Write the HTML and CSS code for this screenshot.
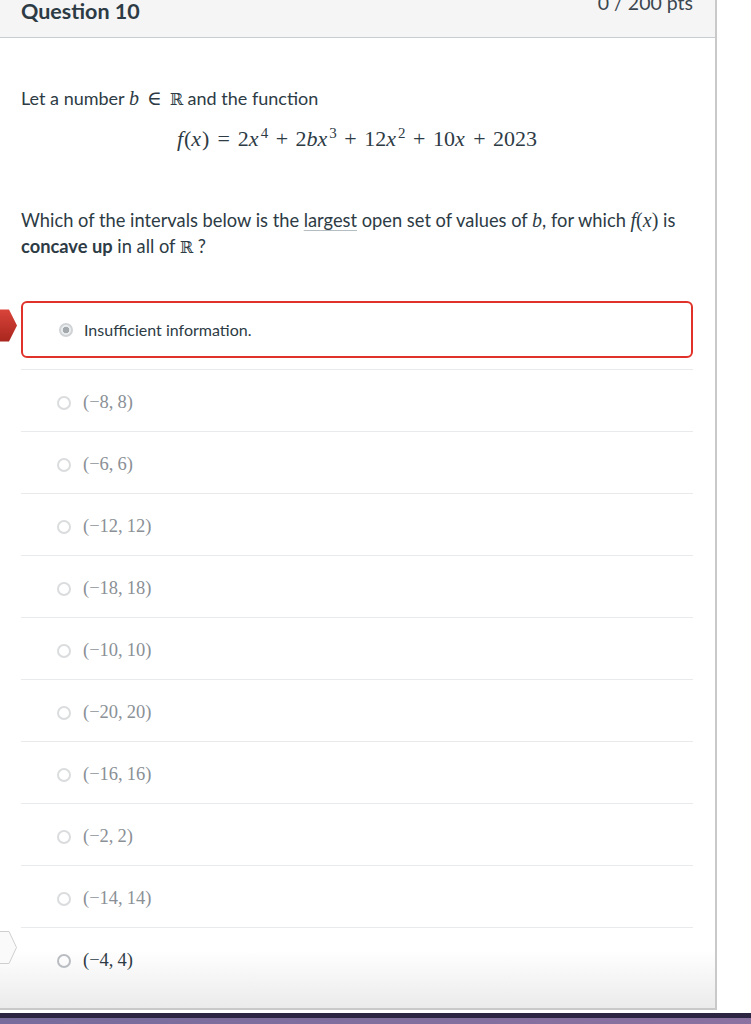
FILE: index.html
```html
<!DOCTYPE html>
<html lang="en">
<head>
<meta charset="utf-8">
<title>Question 10</title>
<link rel="stylesheet" href="styles.css">
</head>
<body>
<div class="page">
  <div class="card">
    <div class="header">
      <span class="title">Question 10</span>
      <span class="pts">0 / 200 pts</span>
    </div>
    <div class="content">
      <p class="intro">Let a number <span class="m"><i>b</i> <span class="rel">∈</span> <span class="bb">ℝ</span></span> and the function</p>
      <div class="formula"><span class="m big"><i>f</i>(<i>x</i>)<span class="eq">=</span>2<i>x</i><sup>4</sup><span class="op">+</span>2<i>bx</i><sup>3</sup><span class="op">+</span>12<i>x</i><sup>2</sup><span class="op">+</span>10<i>x</i><span class="op">+</span>2023</span></div>
      <p class="question">Which of the intervals below is the <span class="u">largest</span> open set of values of <span class="m"><i>b</i></span>, for which <span class="m"><i>f</i>(<i>x</i>)</span> is <strong>concave up</strong> in all of <span class="m"><span class="bb">ℝ</span></span> ?</p>
      <div class="answers">
        <div class="answer selected">
          <div class="choice">
            <span class="radio checked"></span>
            <span class="label">Insufficient information.</span>
          </div>
        </div>
        <div class="answer"><div class="choice"><span class="radio"></span><span class="m opt">(−8,<span class="th"></span>8)</span></div></div>
        <div class="answer"><div class="choice"><span class="radio"></span><span class="m opt">(−6,<span class="th"></span>6)</span></div></div>
        <div class="answer"><div class="choice"><span class="radio"></span><span class="m opt">(−12,<span class="th"></span>12)</span></div></div>
        <div class="answer"><div class="choice"><span class="radio"></span><span class="m opt">(−18,<span class="th"></span>18)</span></div></div>
        <div class="answer"><div class="choice"><span class="radio"></span><span class="m opt">(−10,<span class="th"></span>10)</span></div></div>
        <div class="answer"><div class="choice"><span class="radio"></span><span class="m opt">(−20,<span class="th"></span>20)</span></div></div>
        <div class="answer"><div class="choice"><span class="radio"></span><span class="m opt">(−16,<span class="th"></span>16)</span></div></div>
        <div class="answer"><div class="choice"><span class="radio"></span><span class="m opt">(−2,<span class="th"></span>2)</span></div></div>
        <div class="answer"><div class="choice"><span class="radio"></span><span class="m opt">(−14,<span class="th"></span>14)</span></div></div>
        <div class="answer last"><div class="choice"><span class="radio dark"></span><span class="m opt darktext">(−4,<span class="th"></span>4)</span></div></div>
      </div>
    </div>
    <svg class="marker marker-red" width="18" height="34" viewBox="0 0 18 34">
      <defs>
        <linearGradient id="rg" x1="0" y1="0" x2="0" y2="1">
          <stop offset="0" stop-color="#d9443a"/>
          <stop offset="1" stop-color="#a9261e"/>
        </linearGradient>
      </defs>
      <path d="M0 0.5 H9 L17 16.5 L9 32.5 H0 Z" fill="url(#rg)"/>
    </svg>
    <svg class="marker marker-white" width="18" height="34" viewBox="0 0 18 34">
      <path d="M-1 0.5 H9 L16.5 16.5 L9 32.5 H-1 Z" fill="#fafafa" stroke="#cfcfcf" stroke-width="1"/>
    </svg>
  </div>
  <div class="footer">
    <div class="footer-dark"></div>
    <div class="footer-purple"></div>
  </div>
</div>
</body>
</html>
```
FILE: styles.css
```css
html, body {
  margin: 0;
  padding: 0;
  background: #ffffff;
}
body {
  font-family: Lato, "Liberation Sans", sans-serif;
  color: #2d3b45;
  font-size: 18px;
  width: 751px;
  height: 1024px;
  overflow: hidden;
}
.page {
  display: flex;
  flex-direction: column;
}
.card {
  position: relative;
  width: 715px;
  height: 1008px;
  border-right: 2px solid #c9c9c9;
  border-bottom: 2px solid #c9c9c9;
  background: linear-gradient(to bottom, #ffffff 0, #ffffff 950px, #ebebeb 1008px);
}
.header {
  height: 37px;
  background: #f5f5f5;
  border-bottom: 1px solid #c7cdd1;
  display: flex;
  justify-content: space-between;
  align-items: flex-start;
  padding: 0 22px 0 21px;
}
.title {
  font-weight: 700;
  font-size: 21.5px;
  line-height: 24px;
  margin-top: -1px;
}
.pts {
  font-size: 19.5px;
  line-height: 20px;
  margin-top: -7px;
  color: #3b4650;
}
.content {
  padding: 0 22px 0 21px;
}
.intro {
  margin: 47px 0 0;
  line-height: 26px;
}
.m {
  font-family: "Liberation Serif", "DejaVu Serif", serif;
  font-size: 20px;
}
.m i {
  font-style: italic;
}
.bb {
  font-family: "DejaVu Serif", serif;
  font-size: 16px;
}
.rel {
  margin: 0 3px;
}
.formula {
  margin-top: 12px;
  height: 28px;
  line-height: 28px;
  text-align: center;
}
.big {
  font-size: 22px;
}
.big i {
  margin-right: 1px;
}
.big sup {
  font-size: 15px;
  vertical-align: 8px;
  line-height: 0;
  margin-left: 1px;
}
.eq {
  margin: 0 8px;
}
.op {
  margin: 0 7.5px;
}
.question {
  margin: 54px 0 0;
  line-height: 26px;
  font-size: 18.3px;
}
.u {
  text-decoration: underline;
  text-decoration-color: #b5bcc2;
  text-underline-offset: 3px;
}
strong {
  font-weight: 700;
}
.answers {
  margin-top: 40px;
  display: flex;
  flex-direction: column;
}
.answer {
  border-bottom: 1px solid #e9eaeb;
}
.answer.last {
  border-bottom: none;
}
.answer.selected {
  padding-bottom: 11px;
}
.choice {
  display: flex;
  align-items: center;
  height: 57px;
  padding-top: 4px;
  padding-left: 36px;
  gap: 12px;
}
.selected .choice {
  height: 53px;
  padding-top: 0;
  padding-left: 36px;
  border: 2px solid #e0322a;
  border-radius: 6px;
  gap: 11px;
}
.radio {
  width: 10px;
  height: 10px;
  border: 2px solid #dadcde;
  border-radius: 50%;
  flex: none;
  box-sizing: content-box;
}
.radio.checked {
  border-color: #d0d3d6;
  background: radial-gradient(circle, #a4a9ad 0, #a4a9ad 3px, #eceeef 3.6px);
}
.radio.dark {
  border-color: #b9bdc1;
}
.label {
  font-size: 16px;
  color: #2d3b45;
}
.opt {
  color: #8a9096;
  font-size: 18.5px;
}
.darktext {
  color: #2d3b45;
}
.th {
  display: inline-block;
  width: 4px;
}
.marker {
  position: absolute;
  left: 0;
}
.marker-red {
  top: 309px;
}
.marker-white {
  top: 931px;
}
.footer {
  margin-top: 3px;
  display: flex;
  flex-direction: column;
}
.footer-dark {
  height: 5px;
  background: #2c2643;
}
.footer-purple {
  height: 6px;
  background: linear-gradient(to right, #776c9c, #8b72a0);
}
```
